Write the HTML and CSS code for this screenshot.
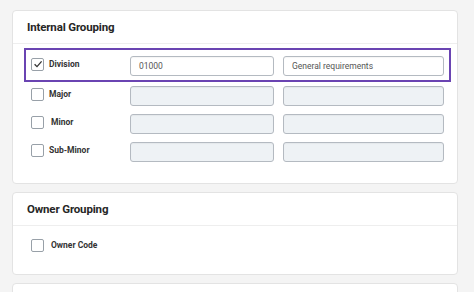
FILE: index.html
```html
<!DOCTYPE html>
<html lang="en">
<head>
  <meta charset="UTF-8">
  <title>Grouping</title>
  <link rel="stylesheet" href="styles.css">
</head>
<body>
  <div class="page">
    <div class="card">
      <div class="card-head">Internal Grouping</div>
      <div class="card-body">
        <div class="row highlight">
          <label class="check">
            <span class="box checked">
              <svg width="10" height="10" viewBox="0 0 10 10"><polyline points="1.6,5.2 4,7.6 8.6,2.4" fill="none" stroke="#333" stroke-width="1.3"/></svg>
            </span>
            <span class="label">Division</span>
          </label>
          <div class="field filled">01000</div>
          <div class="field filled">General requirements</div>
        </div>
        <div class="row">
          <label class="check"><span class="box"></span><span class="label">Major</span></label>
          <div class="field"></div>
          <div class="field"></div>
        </div>
        <div class="row">
          <label class="check"><span class="box"></span><span class="label indent">Minor</span></label>
          <div class="field"></div>
          <div class="field"></div>
        </div>
        <div class="row">
          <label class="check"><span class="box"></span><span class="label">Sub-Minor</span></label>
          <div class="field"></div>
          <div class="field"></div>
        </div>
      </div>
    </div>

    <div class="card">
      <div class="card-head">Owner Grouping</div>
      <div class="card-body owner">
        <div class="row">
          <label class="check"><span class="box"></span><span class="label indent">Owner Code</span></label>
        </div>
      </div>
    </div>

    <div class="card stub"></div>
  </div>
</body>
</html>
```

FILE: styles.css
```css
html, body {
  margin: 0;
  height: 100%;
  overflow: hidden;
}

body {
  background-color: #f4f4f4;
  font-family: Roboto, "Liberation Sans", Arial, sans-serif;
  color: #222;
}

.page {
  width: 446px;
  padding: 10px 0 0 12px;
}

.card {
  background-color: #fff;
  border: 1px solid #e3e3e3;
  border-radius: 4px;
  margin-bottom: 8px;
}

.card-head {
  height: 32px;
  line-height: 32px;
  padding-left: 14px;
  font-size: 11.5px;
  font-weight: bold;
  letter-spacing: -0.15px;
  color: #262626;
  border-bottom: 1px solid #eeeeee;
}

.card-body {
  padding: 4px 6px 17px 11px;
}

.card-body.owner {
  padding: 7px 6px 13px 11px;
}

.row {
  display: grid;
  grid-template-columns: 90px 144px 161px;
  column-gap: 9px;
  align-items: center;
  height: 28px;
  padding-left: 7px;
}

.row.highlight {
  height: 28px;
  padding: 2px 6px 0 5px;
  border: 2px solid #6a44b2;
}

.check {
  display: flex;
  align-items: center;
  gap: 5px;
  margin-top: -4px;
}

.box {
  width: 11px;
  height: 11px;
  border: 1px solid #98a0a8;
  border-radius: 2px;
  background-color: #fff;
  display: flex;
  align-items: center;
  justify-content: center;
}

.label {
  font-size: 8.5px;
  font-weight: bold;
  color: #333;
}

.label.indent {
  padding-left: 2px;
}

.field {
  height: 18px;
  line-height: 18px;
  border: 1px solid #b4bac1;
  border-radius: 3px;
  background-color: #eef2f5;
  padding-left: 8px;
  font-size: 8.5px;
  color: #555;
  box-shadow: inset 0 1px 1px rgba(0, 0, 0, 0.04);
}

.field.filled {
  background-color: #fff;
}

.card.stub {
  height: 40px;
}
```
